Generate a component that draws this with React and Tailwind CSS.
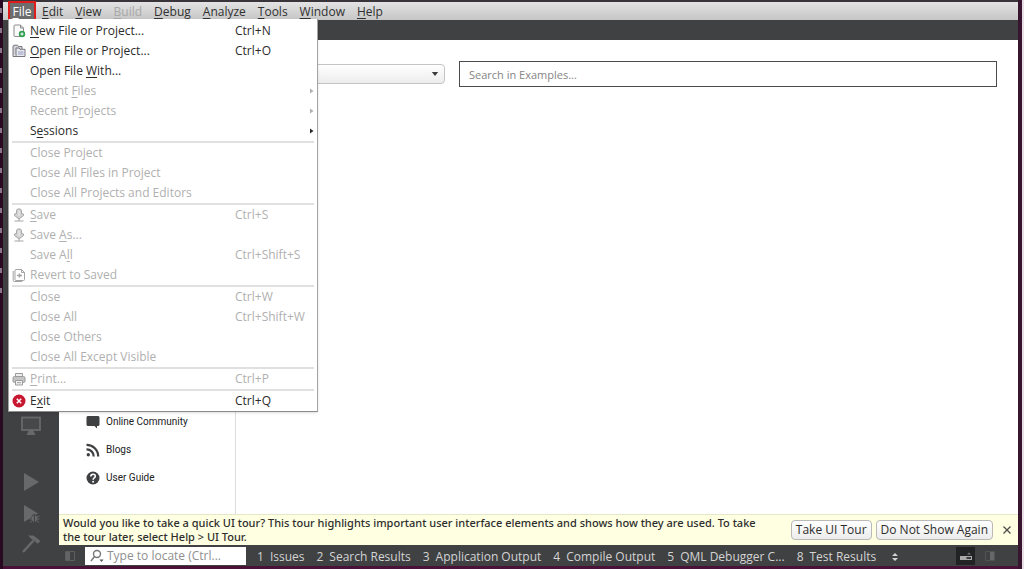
import { clsx } from 'clsx';

const MENUS = ['&File', '&Edit', '&View', '&Build', '&Debug', '&Analyze', '&Tools', '&Window', '&Help'];

const FILE_MENU = [
  [
    { label: '&New File or Project...', keys: 'Ctrl+N', icon: NewFileIcon },
    { label: '&Open File or Project...', keys: 'Ctrl+O', icon: OpenFileIcon },
    { label: 'Open File &With...' },
    { label: 'Recent &Files', submenu: true, disabled: true },
    { label: 'Recent P&rojects', submenu: true, disabled: true },
    { label: 'S&essions', submenu: true },
  ],
  [
    { label: 'Close Project', disabled: true },
    { label: 'Close All Files in Project', disabled: true },
    { label: 'Close All Projects and Editors', disabled: true },
  ],
  [
    { label: '&Save', keys: 'Ctrl+S', icon: SaveIcon, disabled: true },
    { label: 'Save &As...', icon: SaveIcon, disabled: true },
    { label: 'Save A&ll', keys: 'Ctrl+Shift+S', disabled: true },
    { label: 'Revert to Saved', icon: RevertIcon, disabled: true },
  ],
  [
    { label: 'Close', keys: 'Ctrl+W', disabled: true },
    { label: 'Close All', keys: 'Ctrl+Shift+W', disabled: true },
    { label: 'Close Others', disabled: true },
    { label: 'Close All Except Visible', disabled: true },
  ],
  [{ label: '&Print...', keys: 'Ctrl+P', icon: PrintIcon, disabled: true }],
  [{ label: 'E&xit', keys: 'Ctrl+Q', icon: ExitIcon }],
];

const PANES = [
  [1, 'Issues'],
  [2, 'Search Results'],
  [3, 'Application Output'],
  [4, 'Compile Output'],
  [5, 'QML Debugger C...'],
  [8, 'Test Results'],
];

// The letter after "&" is the underlined mnemonic.
function Mnemonic({ text }) {
  const i = text.indexOf('&');
  if (i < 0) return <span>{text}</span>;
  return (
    <span>
      {text.slice(0, i)}
      <span className="underline underline-offset-2">{text[i + 1]}</span>
      {text.slice(i + 2)}
    </span>
  );
}

function NewFileIcon() {
  return (
    <svg viewBox="0 0 14 14" className="size-3.5">
      <path d="M3 1h5.500l3 3v7.500a1 1 0 0 1-1 1H3a1 1 0 0 1-1-1V2a1 1 0 0 1 1-1z" fill="#fafafa" stroke="#8b8b8b" />
      <path d="M8.500 1v3h3" fill="none" stroke="#8b8b8b" />
      <circle cx="10" cy="10" r="3.200" fill="#2f9e4f" />
      <path d="M10 8.400v3.200M8.400 10h3.200" stroke="#fff" />
    </svg>
  );
}

function OpenFileIcon() {
  return (
    <svg viewBox="0 0 14 14" className="size-3.5">
      <path d="M1 12.500V2l.8-.8h3.700l1 1.300h3.500V5" fill="#d2d2d8" stroke="#77777f" />
      <path d="M1 12.500h3" stroke="#77777f" />
      <path d="M4 4h3l1 1.300h5v7.200H4z" fill="#e9e9f0" stroke="#77777f" />
      <path d="M6 7h5.500v4H6z" fill="#bfc1d8" />
    </svg>
  );
}

function SaveIcon() {
  return (
    <svg viewBox="0 0 14 14" className="size-3.5" fill="none" stroke="#a6a6a6">
      <path d="M5.500 1h3l1 1.500v3l2 .5v1.500L7 11 2.500 7.500V6l2-.5v-3z" fill="#d2d2d2" />
      <path d="M7 2.500v5.500" stroke="#f0f0f0" />
      <path d="M2.500 13h9M7 11v2" />
    </svg>
  );
}

function RevertIcon() {
  return (
    <svg viewBox="0 0 14 14" className="size-3.5" fill="none" stroke="#a3a3a3">
      <path d="M4 1.500h5.500l3 3v7a1 1 0 0 1-1 1H4a1 1 0 0 1-1-1v-9a1 1 0 0 1 1-1z" />
      <path d="M9.500 1.500v3h3M1.200 3v9.500a1 1 0 0 0 1 1h8" />
      <path d="M5 7.500h5M7.500 5.500v4" strokeWidth="1.500" />
    </svg>
  );
}

function PrintIcon() {
  return (
    <svg viewBox="0 0 14 14" className="size-3.5" stroke="#9b9b9b">
      <path d="M3.500 5V1.500h7V5" fill="#eee" />
      <rect x="1" y="4.500" width="12" height="6" rx="1.500" fill="#c4c4c4" />
      <path d="M3.500 8.500h7v4.500h-7zM5 10.700h4" fill="#f1f1f1" />
    </svg>
  );
}

function ExitIcon() {
  return (
    <svg viewBox="0 0 14 14" className="size-3.5">
      <circle cx="7" cy="7" r="6.500" fill="#c81730" />
      <path d="M4.800 4.800l4.400 4.400M9.200 4.800L4.800 9.200" stroke="#fff" strokeWidth="1.500" />
    </svg>
  );
}

function FileMenu() {
  return (
    <div
      role="menu"
      className="absolute top-[18px] left-0 z-10 w-[310px] border border-t-0 border-[#a3a3a3] border-b-[#8c8c8c] bg-white px-[3px] pt-0.5 text-[#2b2b2b] shadow-sm"
    >
      {FILE_MENU.map((group, g) => (
        <div key={g} className={clsx(g > 0 && 'border-t-2 border-[#e0e0e0]')}>
          {group.map(({ label, keys, icon: Icon, submenu, disabled }) => (
            <button
              key={label}
              role="menuitem"
              disabled={disabled}
              className="flex h-5 w-full items-center text-left disabled:text-[#b0b0b0]"
            >
              <span className="w-[18px]">{Icon && <Icon />}</span>
              <span className="flex-1">
                <Mnemonic text={label} />
              </span>
              {keys && <span className="w-[79px]">{keys}</span>}
              {submenu && (
                <svg viewBox="0 0 4 6" className="h-1.5 w-1" fill="currentColor">
                  <path d="M0 .5l3.500 2.500L0 5.500z" />
                </svg>
              )}
            </button>
          ))}
        </div>
      ))}
    </div>
  );
}

function MenuBar() {
  return (
    <nav className="flex h-[18px] items-center bg-linear-to-b from-[#e3e3e3] to-[#c6c6c6] pl-[5px]">
      {MENUS.map((name, i) => (
        <div key={name} className={clsx(i === 0 && 'relative')}>
          <button
            disabled={name === '&Build'}
            className={clsx(
              'flex items-center pt-0.5 disabled:text-[#a8a8a8]',
              i === 0
                ? 'h-5 w-7 justify-center border-2 border-[#e01b1b] bg-[#6d6d6d] text-white'
                : 'h-[18px] px-1.5 text-[#303030]',
            )}
          >
            <Mnemonic text={name} />
          </button>
          {i === 0 && <FileMenu />}
        </div>
      ))}
    </nav>
  );
}

function ModeBar() {
  return (
    <aside className="flex w-14 shrink-0 flex-col items-center justify-end bg-[#404143] pb-3 text-[#68696b]">
      <button aria-label="Desktop kit" className="mb-9">
        <svg viewBox="0 0 20 20" className="size-5">
          <rect x="1" y="1.500" width="18" height="12.500" fill="#47484a" stroke="currentColor" strokeWidth="1.800" />
          <path d="M8 14h4l2.500 5h-9z" fill="currentColor" />
        </svg>
      </button>
      <button aria-label="Run" className="mb-3">
        <svg viewBox="0 0 20 20" className="size-5" fill="currentColor">
          <path d="M3 1l15 9-15 9z" />
        </svg>
      </button>
      <button aria-label="Debug" className="mb-2.5">
        <svg viewBox="0 0 20 20" className="size-5">
          <path d="M3 1l14 8.500L3 18z" fill="currentColor" />
          <ellipse cx="13.500" cy="14.500" rx="3.200" ry="4" fill="currentColor" stroke="#404143" />
          <path d="M8.500 12l2.500 1M8.500 15h2.500M9 18.500l2-1.500M18.500 12L16 13M18.500 15H16M18 18.500L16 17" stroke="currentColor" />
          <path d="M13.500 11v7" stroke="#404143" />
        </svg>
      </button>
      <button aria-label="Build">
        <svg viewBox="0 0 20 20" className="size-5">
          <path d="M2 18L12.500 6.500" stroke="currentColor" strokeWidth="2.500" />
          <path d="M7 1.500h5.500L19.500 7l-2.800 2.800L13 6.500 10.500 5z" fill="currentColor" />
        </svg>
      </button>
    </aside>
  );
}

function HelpLinks() {
  return (
    <div className="flex w-[177px] shrink-0 flex-col justify-end border-r border-[#dcdcdc] pb-[22px] pl-[27px] font-[Roboto,sans-serif] text-[10px] font-normal text-[#202122]">
      <a href="#community" className="flex h-7 items-center gap-1.5">
        <svg viewBox="0 0 14 14" className="size-3.5" fill="#3f4042">
          <path d="M1.500 1h11l1 1v8l-1 1H11v2.500L8.500 11h-7L.5 10V2z" />
        </svg>
        Online Community
      </a>
      <a href="#blogs" className="flex h-7 items-center gap-1.5">
        <svg viewBox="0 0 14 14" className="size-3.5" fill="none" stroke="#3f4042" strokeWidth="2.200">
          <path d="M.5 1.800a11.500 11.500 0 0 1 11.700 11.700M.5 6.300a7 7 0 0 1 7.200 7.200" />
          <circle cx="2.300" cy="11.800" r="1.700" fill="#3f4042" stroke="none" />
        </svg>
        Blogs
      </a>
      <a href="#guide" className="flex h-7 items-center gap-1.5">
        <svg viewBox="0 0 14 14" className="size-3.5">
          <circle cx="7" cy="7" r="6.500" fill="#3f4042" />
          <path d="M4.800 5.500c0-3 4.500-3 4.500-.2C9.300 7 7.100 6.800 7.100 8.700" fill="none" stroke="#fff" strokeWidth="1.600" />
          <circle cx="7.100" cy="10.700" r="1" fill="#fff" />
        </svg>
        User Guide
      </a>
    </div>
  );
}

function Examples() {
  return (
    <div className="flex flex-1 items-start gap-3.5 pt-[21px] pr-[21px] pl-3">
      <div className="mt-[3px] grid w-[197px] items-center">
        <select
          aria-label="Qt version"
          className="col-start-1 row-start-1 h-5 appearance-none rounded-sm border border-[#c4c4c4] bg-linear-to-b from-white to-[#ededed]"
        />
        <svg viewBox="0 0 8 5" className="pointer-events-none col-start-1 row-start-1 mr-1.5 h-1 w-2 justify-self-end" fill="#3c3c3c">
          <path d="M0 0h8L4 5z" />
        </svg>
      </div>
      <input
        aria-label="Search in Examples"
        placeholder="Search in Examples..."
        className="h-[26px] flex-1 border border-[#4a4b4b] bg-white px-[9px] text-[11px] placeholder:text-[#858585]"
      />
    </div>
  );
}

function TourBar() {
  const button =
    'h-5 rounded-sm border border-[#b9b9b9] bg-linear-to-b from-white to-[#ececec] px-1 whitespace-nowrap';
  return (
    <div className="flex items-center border-t border-[#e6e6c8] bg-[#ffffe1] py-px pr-[3px] pl-1 text-[#2d2d2d]">
      <p className="flex-1 pr-6 font-['Noto_Sans',sans-serif] text-[11px] leading-[14px]">
        Would you like to take a quick UI tour? This tour highlights important user interface elements and shows how
        they are used. To take the tour later, select Help &gt; UI Tour.
      </p>
      <button className={button}>Take UI Tour</button>
      <button className={clsx(button, 'ml-1')}>Do Not Show Again</button>
      <button aria-label="Close" className="ml-1.5 p-1">
        <svg viewBox="0 0 8 8" className="size-2" stroke="#4c4c48" strokeWidth="1.300">
          <path d="M.5.5l7 7M7.500.5l-7 7" />
        </svg>
      </button>
    </div>
  );
}

function StatusBar() {
  return (
    <footer className="flex h-[21px] items-center bg-[#404143] text-[#d4d4d4]">
      <button aria-label="Toggle left sidebar" className="flex w-[26px] justify-center">
        <svg viewBox="0 0 10 10" className="mr-1 size-2.5">
          <path d="M.5.500h9v9h-9z" fill="none" stroke="#5c5d5f" />
          <path d="M1 1h4v8H1z" fill="#636466" />
        </svg>
      </button>
      <label className="flex h-[18px] w-[161px] items-center bg-white pl-[5px]">
        <svg viewBox="0 0 14 14" className="size-3.5" fill="none" stroke="#777" strokeWidth="1.400">
          <circle cx="7" cy="5" r="3.500" />
          <path d="M4.500 7.500L1 12" />
          <path d="M9.500 10.500h4l-2 2.500z" fill="#555" stroke="none" />
        </svg>
        <input
          aria-label="Locator"
          placeholder="Type to locate (Ctrl..."
          className="ml-[3px] min-w-0 flex-1 placeholder:text-[#8f8f8f]"
        />
      </label>
      <div className="ml-[11px] flex gap-3 pt-0.5 whitespace-nowrap">
        {PANES.map(([n, title]) => (
          <button key={n} className="flex gap-1.5">
            <span>{n}</span>
            <span>{title}</span>
          </button>
        ))}
        <button aria-label="Output panes" className="ml-1">
          <svg viewBox="0 0 6 8" className="h-2 w-1.5" fill="currentColor">
            <path d="M3 0l3 3H0zM3 8L0 5h6z" />
          </svg>
        </button>
      </div>
      <button aria-label="Progress details" className="ml-auto flex h-[18px] w-[19px] items-center justify-center bg-[#222325]">
        <svg viewBox="0 0 12 10" className="h-2.5 w-3">
          <path d="M0 5h12v4H0z" fill="#a9a9a9" />
          <path d="M6.500 6h4.500v2H6.500z" fill="#3a3b3c" />
          <path d="M7 3.500l2-2 2 2z" fill="#777" />
        </svg>
      </button>
      <button aria-label="Toggle right sidebar" className="mr-[23px] ml-2.5">
        <svg viewBox="0 0 10 10" className="size-2.5">
          <path d="M.5.500h9v9h-9z" fill="none" stroke="#515254" />
          <path d="M5 1h4v8H5z" fill="#66676a" />
        </svg>
      </button>
    </footer>
  );
}

export default function App() {
  return (
    <div className="flex min-h-screen bg-[#38152f] font-['Open_Sans','Noto_Sans',sans-serif] text-[12px] leading-4 font-medium">
      {/* sliver of the terminal behind the window */}
      <div className="w-[3px] bg-[#2a0a22]">
        <div className="h-[300px] w-0.5 bg-[repeating-linear-gradient(#2a0a22_0_8px,#8b7687_8px_13px,#2a0a22_13px_20px)]" />
      </div>
      <div className="flex min-w-0 flex-1 flex-col border-t-2 border-b-3 border-t-[#39343a] border-b-[#4a1238]">
        <MenuBar />
        <div className="flex flex-1">
          <ModeBar />
          <div className="flex min-w-0 flex-1 flex-col">
            <header className="h-5 bg-[#404143]" />
            <main className="flex flex-1 bg-white">
              <HelpLinks />
              <Examples />
            </main>
            <TourBar />
            <StatusBar />
          </div>
        </div>
      </div>
      <div className="w-1 bg-[#38152f]" />
      <div className="w-0.5 bg-[#eadfe7]" />
    </div>
  );
}
